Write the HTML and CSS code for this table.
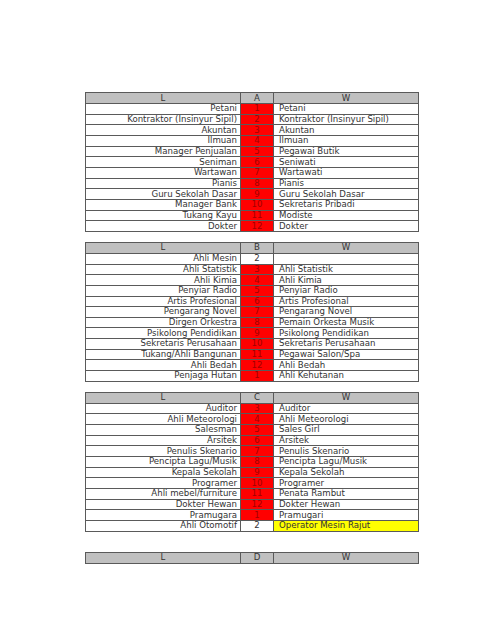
FILE: index.html
```html
<!DOCTYPE html>
<html>
<head>
<meta charset="utf-8">
<link rel="stylesheet" href="styles.css">
</head>
<body>
<div class="page">
<table class="sheet">
<colgroup><col class="c-l"><col class="c-n"><col class="c-w"></colgroup>
<tr class="head"><th>L</th><th>A</th><th>W</th></tr>
<tr><td class="l">Petani</td><td class="n red">1</td><td class="w">Petani</td></tr>
<tr><td class="l">Kontraktor (Insinyur Sipil)</td><td class="n red">2</td><td class="w">Kontraktor (Insinyur Sipil)</td></tr>
<tr><td class="l">Akuntan</td><td class="n red">3</td><td class="w">Akuntan</td></tr>
<tr><td class="l">Ilmuan</td><td class="n red">4</td><td class="w">Ilmuan</td></tr>
<tr><td class="l">Manager Penjualan</td><td class="n red">5</td><td class="w">Pegawai Butik</td></tr>
<tr><td class="l">Seniman</td><td class="n red">6</td><td class="w">Seniwati</td></tr>
<tr><td class="l">Wartawan</td><td class="n red">7</td><td class="w">Wartawati</td></tr>
<tr><td class="l">Pianis</td><td class="n red">8</td><td class="w">Pianis</td></tr>
<tr><td class="l">Guru Sekolah Dasar</td><td class="n red">9</td><td class="w">Guru Sekolah Dasar</td></tr>
<tr><td class="l">Manager Bank</td><td class="n red">10</td><td class="w">Sekretaris Pribadi</td></tr>
<tr><td class="l">Tukang Kayu</td><td class="n red">11</td><td class="w">Modiste</td></tr>
<tr><td class="l">Dokter</td><td class="n red">12</td><td class="w">Dokter</td></tr>
</table>

<table class="sheet">
<colgroup><col class="c-l"><col class="c-n"><col class="c-w"></colgroup>
<tr class="head"><th>L</th><th>B</th><th>W</th></tr>
<tr><td class="l">Ahli Mesin</td><td class="n">2</td><td class="w"></td></tr>
<tr><td class="l">Ahli Statistik</td><td class="n red">3</td><td class="w">Ahli Statistik</td></tr>
<tr><td class="l">Ahli Kimia</td><td class="n red">4</td><td class="w">Ahli Kimia</td></tr>
<tr><td class="l">Penyiar Radio</td><td class="n red">5</td><td class="w">Penyiar Radio</td></tr>
<tr><td class="l">Artis Profesional</td><td class="n red">6</td><td class="w">Artis Profesional</td></tr>
<tr><td class="l">Pengarang Novel</td><td class="n red">7</td><td class="w">Pengarang Novel</td></tr>
<tr><td class="l">Dirgen Orkestra</td><td class="n red">8</td><td class="w">Pemain Orkesta Musik</td></tr>
<tr><td class="l">Psikolong Pendidikan</td><td class="n red">9</td><td class="w">Psikolong Pendidikan</td></tr>
<tr><td class="l">Sekretaris Perusahaan</td><td class="n red">10</td><td class="w">Sekretaris Perusahaan</td></tr>
<tr><td class="l">Tukang/Ahli Bangunan</td><td class="n red">11</td><td class="w">Pegawai Salon/Spa</td></tr>
<tr><td class="l">Ahli Bedah</td><td class="n red">12</td><td class="w">Ahli Bedah</td></tr>
<tr><td class="l">Penjaga Hutan</td><td class="n red">1</td><td class="w">Ahli Kehutanan</td></tr>
</table>

<table class="sheet last">
<colgroup><col class="c-l"><col class="c-n"><col class="c-w"></colgroup>
<tr class="head"><th>L</th><th>C</th><th>W</th></tr>
<tr><td class="l">Auditor</td><td class="n red">3</td><td class="w">Auditor</td></tr>
<tr><td class="l">Ahli Meteorologi</td><td class="n red">4</td><td class="w">Ahli Meteorologi</td></tr>
<tr><td class="l">Salesman</td><td class="n red">5</td><td class="w">Sales Girl</td></tr>
<tr><td class="l">Arsitek</td><td class="n red">6</td><td class="w">Arsitek</td></tr>
<tr><td class="l">Penulis Skenario</td><td class="n red">7</td><td class="w">Penulis Skenario</td></tr>
<tr><td class="l">Pencipta Lagu/Musik</td><td class="n red">8</td><td class="w">Pencipta Lagu/Musik</td></tr>
<tr><td class="l">Kepala Sekolah</td><td class="n red">9</td><td class="w">Kepala Sekolah</td></tr>
<tr><td class="l">Programer</td><td class="n red">10</td><td class="w">Programer</td></tr>
<tr><td class="l">Ahli mebel/furniture</td><td class="n red">11</td><td class="w">Penata Rambut</td></tr>
<tr><td class="l">Dokter Hewan</td><td class="n red">12</td><td class="w">Dokter Hewan</td></tr>
<tr><td class="l">Pramugara</td><td class="n red">1</td><td class="w">Pramugari</td></tr>
<tr><td class="l">Ahli Otomotif</td><td class="n">2</td><td class="w yellow">Operator Mesin Rajut</td></tr>
</table>

<table class="sheet">
<colgroup><col class="c-l"><col class="c-n"><col class="c-w"></colgroup>
<tr class="head"><th>L</th><th>D</th><th>W</th></tr>
</table>
</div>
</body>
</html>
```

FILE: styles.css
```css
html, body {
  margin: 0;
  padding: 0;
  background: #ffffff;
}

.page {
  padding: 92px 0 0 85px;
  font-family: "DejaVu Sans", sans-serif;
  font-size: 8.6px;
  color: #333333;
}

.sheet {
  border-collapse: collapse;
  table-layout: fixed;
  width: 333px;
  margin-bottom: 10px;
}

.sheet.last {
  margin-bottom: 20px;
}

.c-l { width: 155px; }
.c-n { width: 33px; }
.c-w { width: 145px; }

.sheet th,
.sheet td {
  border: 1px solid #5a5a5a;
  padding: 0;
  height: 9.67px;
  line-height: 9px;
  white-space: nowrap;
  overflow: hidden;
}

.sheet .head th {
  background: #c0c0c0;
  font-weight: normal;
  text-align: center;
  height: 10px;
  color: #333333;
}

.l {
  text-align: right;
  padding-right: 3px !important;
}

.n {
  text-align: center;
}

.w {
  text-align: left;
  padding-left: 5px !important;
}

.red {
  background: #ff0000;
  color: #a00000;
}

.yellow {
  background: #ffff00;
}
```
